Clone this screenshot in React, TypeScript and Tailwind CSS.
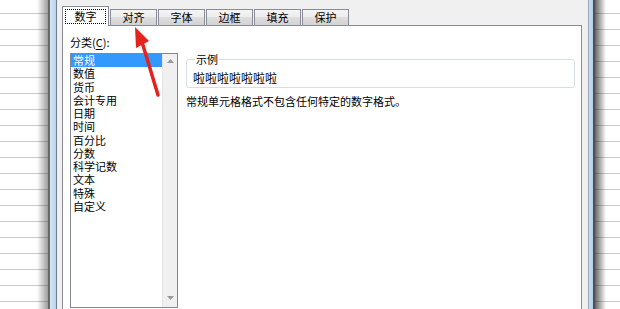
import { memo } from "react";

const TABS = ["数字", "对齐", "字体", "边框", "填充", "保护"];

const CATEGORIES = [
  "常规",
  "数值",
  "货币",
  "会计专用",
  "日期",
  "时间",
  "百分比",
  "分数",
  "科学记数",
  "文本",
  "特殊",
  "自定义",
];

// spreadsheet rows peeking out behind the dialog
const SheetEdge = memo(function SheetEdge({ side, width }: { side: "left" | "right"; width: string }) {
  return (
    <div
      className={`flex h-full shrink-0 bg-white bg-[repeating-linear-gradient(to_bottom,transparent_0px,transparent_13px,#c9c9c9_13px,#c9c9c9_14px,transparent_14px,transparent_16px)] ${width}`}
    >
      {side === "left" ? (
        <>
          <div className="flex-1" />
          <div className="w-[11px] bg-[linear-gradient(to_right,rgba(0,0,0,0),rgba(0,0,0,0.38))]" />
        </>
      ) : (
        <>
          <div className="w-[11px] bg-[linear-gradient(to_right,rgba(0,0,0,0.6),rgba(0,0,0,0))]" />
          <div className="flex-1" />
        </>
      )}
    </div>
  );
});

const ScrollArrow = ({ up }: { up?: boolean }) => (
  <svg width="7" height="4" viewBox="0 0 7 4" className="block">
    <path d={up ? "M0 4 L3.5 0 L7 4 Z" : "M0 0 L3.5 4 L7 0 Z"} fill="#9a9a9a" />
  </svg>
);

export default function App() {
  return (
    <div className="relative flex h-[309px] w-[620px] overflow-hidden bg-white font-['Noto_Sans_CJK_SC','Noto_Sans',sans-serif] text-[11px] text-black">
      <SheetEdge side="left" width="w-[48px]" />

      {/* Dialog frame, left edge */}
      <div className="h-full w-[2px] shrink-0 bg-[#686868]" />
      <div className="h-full w-[6px] shrink-0 bg-[linear-gradient(to_right,#d6e7f8,#b9d3ee)]" />
      <div className="h-full w-[1px] shrink-0 bg-[#6f7d8c]" />

      {/* Dialog body */}
      <div className="flex h-full w-[531px] shrink-0 flex-col bg-[#f0f0f0] pl-[5px] pr-[6px]">
        {/* Tab strip */}
        <div className="relative z-10 -mb-[1px] flex h-[26px] shrink-0 items-end">
          {TABS.map((tab, i) =>
            i === 0 ? (
              <div
                key={tab}
                className="mr-[1px] h-[20px] w-[47px] border-x border-t border-[#898c95] bg-white px-[2px] pt-[2px]"
              >
                <div className="flex h-[15px] items-center justify-center border border-dotted border-black leading-[13px]">
                  {tab}
                </div>
              </div>
            ) : (
              <div
                key={tab}
                className="mb-[1px] mr-[1px] flex h-[16px] w-[47px] items-center justify-center border-x border-t border-[#898c95] bg-[linear-gradient(to_bottom,#f4f4f4_0%,#ececec_50%,#dedede_50%,#d2d2d2_100%)] leading-[13px]"
              >
                {tab}
              </div>
            )
          )}
        </div>

        {/* Tab panel */}
        <div className="flex h-[300px] shrink-0 border border-[#898c95] bg-white pl-[7px] pr-[6px] pt-[10px]">
          {/* Category list */}
          <div className="flex w-[108px] shrink-0 flex-col">
            <div className="h-[13px] leading-[13px]">
              分类(<span className="underline underline-offset-2">C</span>):
            </div>
            <div className="mt-[4px] flex h-[255px] border border-[#828790] bg-white">
              <div className="flex-1 leading-[13.27px]">
                {CATEGORIES.map((c, i) => (
                  <div
                    key={c}
                    className={
                      i === 0 ? "h-[13.27px] bg-[#3399ff] pl-[2px] text-white" : "h-[13.27px] pl-[2px]"
                    }
                  >
                    {c}
                  </div>
                ))}
              </div>
              <div className="flex w-[15px] flex-col items-center justify-between border-l border-[#e4e4e4] bg-[#f0f0f0] pb-[7px] pt-[5px]">
                <ScrollArrow up />
                <ScrollArrow />
              </div>
            </div>
          </div>

          {/* Sample + description */}
          <div className="ml-[8px] flex flex-1 flex-col pt-[17px]">
            <fieldset className="rounded-[3px] border border-[#d5dfe5] pb-[3px] pl-[6px] pt-[6px]">
              <legend className="ml-[2px] px-[1px] leading-[12px]">示例</legend>
              <div className="text-[12px] leading-[13px]">啦啦啦啦啦啦啦</div>
            </fieldset>
            <p className="mt-[7px] leading-[13px]">常规单元格格式不包含任何特定的数字格式。</p>
          </div>
        </div>
      </div>

      {/* Dialog frame, right edge */}
      <div className="h-full w-[1px] shrink-0 bg-[#9ca8b5]" />
      <div className="h-full w-[4px] shrink-0 bg-[linear-gradient(to_right,#c8def5,#b4cfec)]" />
      <div className="h-full w-[2px] shrink-0 bg-[#4f4f4f]" />

      <SheetEdge side="right" width="w-[25px]" />

      {/* Red annotation arrow */}
      <svg
        className="pointer-events-none absolute left-[128px] top-[22px]"
        width="40"
        height="80"
        viewBox="0 0 40 80"
      >
        <line x1="14" y1="20" x2="30" y2="73" stroke="#e3231d" strokeWidth="3.5" strokeLinecap="round" />
        <path d="M7 5 L8 26 L21 19 Z" fill="#e3231d" />
      </svg>
    </div>
  );
}
